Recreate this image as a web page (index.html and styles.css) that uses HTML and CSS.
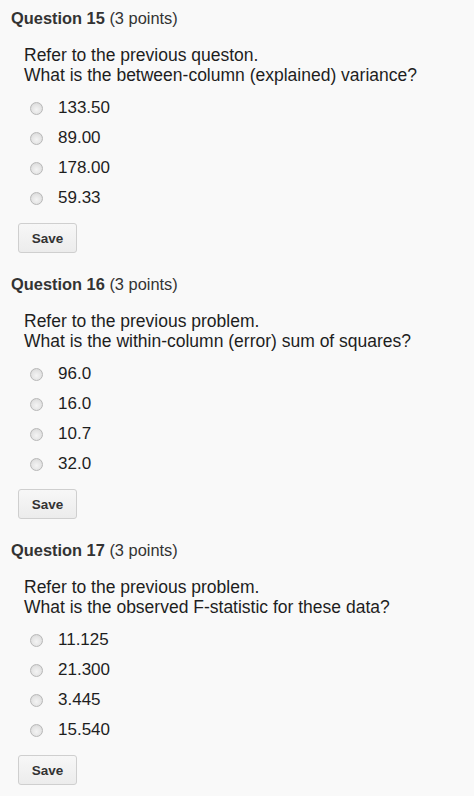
FILE: index.html
```html
<!DOCTYPE html>
<html>
<head>
<meta charset="utf-8">
<link rel="stylesheet" href="styles.css">
</head>
<body>
<div class="quiz">
  <section class="question">
    <h2 class="qhead"><b>Question 15</b> (3 points)</h2>
    <p class="qtext">Refer to the previous queston.<br>What is the between-column (explained) variance?</p>
    <ul class="options">
      <li><label><input type="radio" name="q15"><span>133.50</span></label></li>
      <li><label><input type="radio" name="q15"><span>89.00</span></label></li>
      <li><label><input type="radio" name="q15"><span>178.00</span></label></li>
      <li><label><input type="radio" name="q15"><span>59.33</span></label></li>
    </ul>
    <button class="save" type="button">Save</button>
  </section>
  <section class="question">
    <h2 class="qhead"><b>Question 16</b> (3 points)</h2>
    <p class="qtext">Refer to the previous problem.<br>What is the within-column (error) sum of squares?</p>
    <ul class="options">
      <li><label><input type="radio" name="q16"><span>96.0</span></label></li>
      <li><label><input type="radio" name="q16"><span>16.0</span></label></li>
      <li><label><input type="radio" name="q16"><span>10.7</span></label></li>
      <li><label><input type="radio" name="q16"><span>32.0</span></label></li>
    </ul>
    <button class="save" type="button">Save</button>
  </section>
  <section class="question">
    <h2 class="qhead"><b>Question 17</b> (3 points)</h2>
    <p class="qtext">Refer to the previous problem.<br>What is the observed F-statistic for these data?</p>
    <ul class="options">
      <li><label><input type="radio" name="q17"><span>11.125</span></label></li>
      <li><label><input type="radio" name="q17"><span>21.300</span></label></li>
      <li><label><input type="radio" name="q17"><span>3.445</span></label></li>
      <li><label><input type="radio" name="q17"><span>15.540</span></label></li>
    </ul>
    <button class="save" type="button">Save</button>
  </section>
</div>
</body>
</html>
```
FILE: styles.css
```css
html, body {
  margin: 0;
  padding: 0;
  background: #f9f9f9;
}
body {
  font-family: "Liberation Sans", Arial, sans-serif;
  color: #222;
}
.quiz {
  padding-top: 8px;
}
.question {
  display: flex;
  flex-direction: column;
  align-items: flex-start;
  margin-bottom: 21px;
}
.qhead {
  margin: 0 0 0 11px;
  font-size: 16.4px;
  font-weight: normal;
  line-height: 20px;
  color: #333;
}
.qhead b {
  font-weight: bold;
}
.qtext {
  margin: 17px 0 0 24px;
  font-size: 17.5px;
  line-height: 20px;
  color: #1e1e1e;
}
.options {
  list-style: none;
  margin: 8px 0 0 0;
  padding: 0 0 0 30px;
}
.options li {
  height: 30px;
  display: flex;
  align-items: center;
}
.options label {
  display: flex;
  align-items: center;
  font-size: 17px;
  color: #1e1e1e;
}
.options input {
  appearance: none;
  -webkit-appearance: none;
  margin: 0 15px 0 0;
  width: 13px;
  height: 13px;
  border-radius: 50%;
  border: 1px solid #b8b8b8;
  background: radial-gradient(circle at 50% 60%, #f4f4f4 0%, #e4e4e4 55%, #cfcfcf 100%);
  box-sizing: border-box;
}
.save {
  margin: 10px 0 0 18px;
  width: 59px;
  height: 30px;
  font-family: "Liberation Sans", Arial, sans-serif;
  font-size: 13.5px;
  font-weight: bold;
  color: #333;
  background: linear-gradient(#f7f7f7, #ececec);
  border: 1px solid #cfcfcf;
  border-radius: 3px;
  padding: 0;
}
```
